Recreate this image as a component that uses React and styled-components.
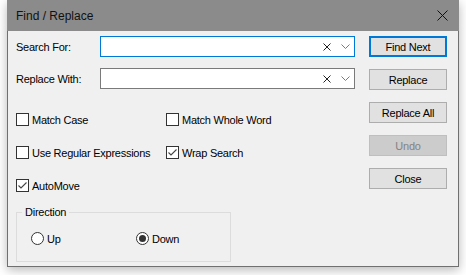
import React from 'react';
import styled, { createGlobalStyle } from 'styled-components';

const Global = createGlobalStyle`
  html, body { margin: 0; padding: 0; background: #ffffff; }
  body {
    font-family: "Liberation Sans", Arial, sans-serif;
    font-size: 11px;
    letter-spacing: -0.25px;
    color: #000;
  }
  * { box-sizing: border-box; }
`;

const Page = styled.div`
  width: 466px;
  height: 275px;
  padding-left: 7px;
  overflow: hidden;
`;

const Window = styled.div`
  width: 452px;
  height: 267px;
  display: flex;
  flex-direction: column;
  box-shadow: 0 3px 10px rgba(0, 0, 0, 0.28);
`;

const TitleBar = styled.div`
  height: 31px;
  flex: none;
  background: #8b8b8b;
  display: flex;
  align-items: center;
  justify-content: space-between;
  padding: 0 11px 0 9px;
`;

const Title = styled.span`
  font-size: 12px;
  letter-spacing: 0;
  color: #111;
`;

const CloseIcon = styled.svg`
  width: 11px;
  height: 11px;
  display: block;
`;

const Body = styled.div`
  flex: 1;
  background: #f0f0f0;
  border: 1px solid #707070;
  border-top: none;
  display: flex;
  gap: 14px;
  padding: 5px 11px 0 8px;
`;

const LeftPane = styled.div`
  width: 339px;
  display: flex;
  flex-direction: column;
`;

const FieldRow = styled.div`
  display: grid;
  grid-template-columns: 84px 255px;
  align-items: center;
  height: 21px;
  margin-top: ${(p) => (p.$first ? 0 : 11)}px;
`;

const Label = styled.label`
  white-space: nowrap;
`;

const Combo = styled.div`
  height: 21px;
  background: #fff;
  border: 1px solid ${(p) => (p.$focused ? '#0078d7' : '#7a7a7a')};
  display: flex;
  align-items: center;
  justify-content: flex-end;
  gap: 10px;
  padding-right: 4px;
`;

const ClearIcon = styled.svg`
  width: 8px;
  height: 8px;
  display: block;
`;

const Chevron = styled.svg`
  width: 9px;
  height: 5px;
  display: block;
`;

const Checks = styled.div`
  display: grid;
  grid-template-columns: 150px auto;
  grid-auto-rows: 13px;
  row-gap: 20px;
  margin-top: 24px;
`;

const CheckItem = styled.div`
  display: flex;
  align-items: center;
  gap: 3px;
  white-space: nowrap;
`;

const Box = styled.span`
  width: 13px;
  height: 13px;
  flex: none;
  background: #fff;
  border: 1px solid #333;
  display: flex;
  align-items: center;
  justify-content: center;
`;

const Group = styled.div`
  position: relative;
  width: 215px;
  height: 50px;
  margin-top: 20px;
  border: 1px solid #dcdcdc;
  display: grid;
  grid-template-columns: 105px auto;
  align-content: start;
  padding: 19px 0 0 14px;
`;

const Legend = styled.span`
  position: absolute;
  top: -8px;
  left: 5px;
  padding: 0 3px;
  background: #f0f0f0;
  line-height: 14px;
`;

const RadioItem = styled.div`
  display: flex;
  align-items: center;
  gap: 3px;
`;

const RadioCircle = styled.span`
  width: 13px;
  height: 13px;
  flex: none;
  border-radius: 50%;
  background: #fff;
  border: 1px solid #333;
  display: flex;
  align-items: center;
  justify-content: center;
  &::after {
    content: '';
    width: 7px;
    height: 7px;
    border-radius: 50%;
    background: ${(p) => (p.$checked ? '#333' : 'transparent')};
  }
`;

const ButtonColumn = styled.div`
  width: 78px;
  display: flex;
  flex-direction: column;
  gap: 12px;
`;

const Button = styled.div`
  height: 21px;
  display: flex;
  align-items: center;
  justify-content: center;
  background: ${(p) => (p.$disabled ? '#cccccc' : '#e1e1e1')};
  border: ${(p) =>
    p.$default ? '2px solid #0078d7' : p.$disabled ? '1px solid #bfbfbf' : '1px solid #adadad'};
  color: ${(p) => (p.$disabled ? '#838383' : '#000')};
`;

const Check = ({ checked, children }) => (
  <CheckItem>
    <Box>
      {checked && (
        <svg width="9" height="8" viewBox="0 0 9 8">
          <polyline points="0.5,3.5 3,6 8.5,0.5" fill="none" stroke="#444" strokeWidth="1.1" />
        </svg>
      )}
    </Box>
    <span>{children}</span>
  </CheckItem>
);

const Field = ({ label, focused, first }) => (
  <FieldRow $first={first}>
    <Label>{label}</Label>
    <Combo $focused={focused}>
      <ClearIcon viewBox="0 0 8 8">
        <path d="M0.5 0.5 L7.5 7.5 M7.5 0.5 L0.5 7.5" stroke="#222" strokeWidth="1" />
      </ClearIcon>
      <Chevron viewBox="0 0 9 5">
        <polyline points="0.5,0.5 4.5,4.5 8.5,0.5" fill="none" stroke="#7a7a7a" strokeWidth="1" />
      </Chevron>
    </Combo>
  </FieldRow>
);

export default function App() {
  return (
    <>
      <Global />
      <Page>
        <Window>
          <TitleBar>
            <Title>Find / Replace</Title>
            <CloseIcon viewBox="0 0 11 11">
              <path d="M0.5 0.5 L10.5 10.5 M10.5 0.5 L0.5 10.5" stroke="#111" strokeWidth="1" />
            </CloseIcon>
          </TitleBar>
          <Body>
            <LeftPane>
              <Field first label="Search For:" focused />
              <Field label="Replace With:" />
              <Checks>
                <Check>Match Case</Check>
                <Check>Match Whole Word</Check>
                <Check>Use Regular Expressions</Check>
                <Check checked>Wrap Search</Check>
                <Check checked>AutoMove</Check>
              </Checks>
              <Group>
                <Legend>Direction</Legend>
                <RadioItem>
                  <RadioCircle />
                  <span>Up</span>
                </RadioItem>
                <RadioItem>
                  <RadioCircle $checked />
                  <span>Down</span>
                </RadioItem>
              </Group>
            </LeftPane>
            <ButtonColumn>
              <Button $default>Find Next</Button>
              <Button>Replace</Button>
              <Button>Replace All</Button>
              <Button $disabled>Undo</Button>
              <Button>Close</Button>
            </ButtonColumn>
          </Body>
        </Window>
      </Page>
    </>
  );
}
